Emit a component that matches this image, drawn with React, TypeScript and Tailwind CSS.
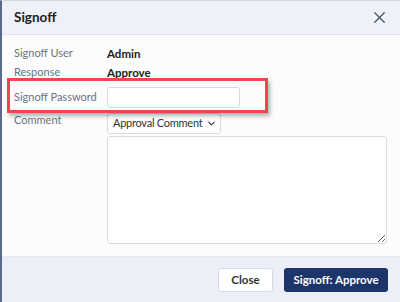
import { X, ChevronDown } from 'lucide-react'

const font = { fontFamily: 'Lato, "Open Sans", sans-serif' }

const SignoffDialog = () => {
  return (
    <div
      className="relative h-[302px] w-[400px] overflow-hidden border-l-2 border-t border-l-[#5a6b8a] border-t-[#d4d8e0] bg-[#fcfcfd] text-[#333]"
      style={font}
    >
      <div className="flex h-[34px] items-center justify-between border-b border-[#dde2ec] bg-[#eef1f8] pl-3 pr-[11px]">
        <span className="text-[13.5px] font-bold text-[#222]">Signoff</span>
        <X className="h-[19px] w-[19px] text-[#4a5568]" strokeWidth={1.7} />
      </div>
      <div className="flex h-[221px] flex-col px-3 pt-[9px] text-[11px]">
        <div className="flex h-[19px] items-center">
          <span className="w-[93px] text-[#6b7280]">Signoff User</span>
          <span className="text-[11.5px] font-bold text-[#222]">Admin</span>
        </div>
        <div className="flex h-[19px] items-center">
          <span className="w-[93px] text-[#6b7280]">Response</span>
          <span className="text-[11.5px] font-bold text-[#222]">Approve</span>
        </div>
        <div className="mt-[4px] flex h-[22px] items-center">
          <span className="w-[93px] text-[#6b7280]">Signoff Password</span>
          <input
            type="password"
            className="h-[21px] w-[133px] rounded-[3px] border border-[#d5dbe5] bg-white px-1 outline-none"
          />
        </div>
        <div className="mt-[5px] flex items-start">
          <span className="-mt-[1px] w-[93px] text-[#6b7280]">Comment</span>
          <div className="flex flex-col gap-[2px]">
            <div className="flex h-[21px] w-[114px] items-center justify-between gap-1 whitespace-nowrap rounded-[3px] border border-[#d5dbe5] bg-white pl-[5px] pr-[5px] text-[11px] tracking-[-0.25px] text-[#333]">
              <span>Approval Comment</span>
              <ChevronDown className="h-[11px] w-[11px] shrink-0" strokeWidth={2.4} />
            </div>
            <textarea className="h-[108px] w-[280px] rounded-[3px] border border-[#d5dbe5] bg-white outline-none" />
          </div>
        </div>
      </div>
      <div className="flex h-[47px] items-center justify-end gap-[11px] border-t border-[#e4e8f0] bg-[#eceff7] pr-[12px]">
        <button className="h-[24px] w-[55px] rounded-[3px] border border-[#d5dbe5] bg-white text-[11.5px] font-bold text-[#333]">
          Close
        </button>
        <button className="h-[24px] w-[104px] rounded-[3px] bg-[#1c366b] text-[11.5px] font-bold text-white">
          Signoff: Approve
        </button>
      </div>
      <div className="absolute left-[5px] top-[77px] h-[35px] w-[261px] border-[3px] border-[#f0454c] shadow-[2px_3px_4px_rgba(0,0,0,0.3)]" />
    </div>
  )
}

export default function App() {
  return <SignoffDialog />
}
